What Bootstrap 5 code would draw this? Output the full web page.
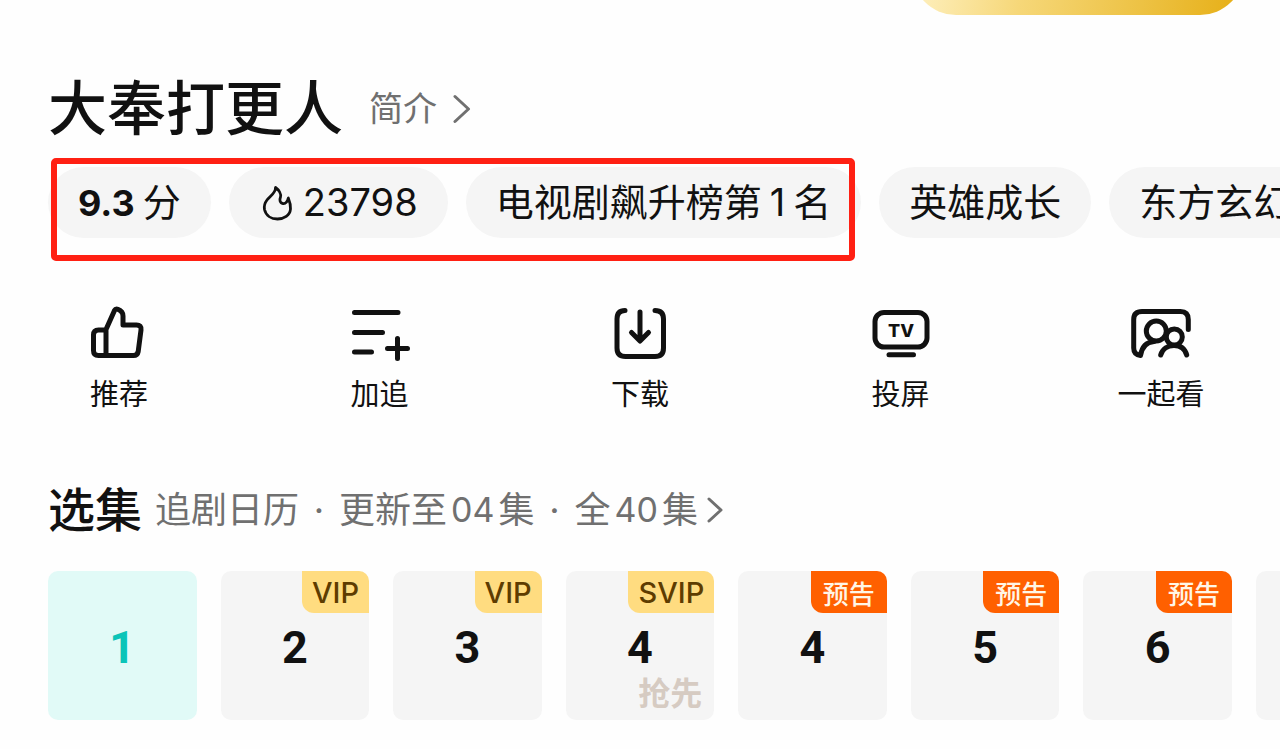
<!DOCTYPE html>
<html lang="zh-CN">
<head>
<meta charset="utf-8">
<meta name="viewport" content="width=device-width, initial-scale=1">
<title>大奉打更人</title>
<link href="https://cdn.jsdelivr.net/npm/bootstrap@5.3.0/dist/css/bootstrap.min.css" rel="stylesheet">
<style>
  body { font-family: Inter, "Noto Sans CJK SC", sans-serif; color: #111; background: #fefefe; }
  a, button { color: inherit; }
  .page-pad { padding-left: 48px; padding-right: 48px; }
  .icon-line { fill: none; stroke: currentColor; stroke-linecap: round; stroke-linejoin: round; }

  .top-strip { height: 15px; padding-right: 36px; }
  .gold-btn { width: 332px; height: 88px; background: linear-gradient(100deg, #fff3c8 0%, #f6d778 35%, #edc244 70%, #e6ae14 100%); }

  .title-row { padding-top: 58px; gap: 26px; }
  .show-title { font-size: 59px; line-height: 72px; font-weight: 500; }
  .intro-link { font-size: 34px; line-height: 48px; gap: 16px; color: #707070; }

  .chip-row { margin-top: 22px; gap: 18px; }
  .chip-group { gap: 18px; }
  .chip { height: 71px; padding: 0 30px; border-radius: 36px; background: #f5f5f5; font-size: 38px; gap: 8px; white-space: nowrap; }
  .chip-score { font-size: 36px; }
  .marker { position: absolute; top: -9px; right: 6px; bottom: -23px; left: 3px; border: 6px solid #ff2013; border-radius: 5px; pointer-events: none; }

  .action-row { margin-top: 64px; }
  .action { width: 142px; gap: 9px; font-size: 29px; line-height: 40px; }

  .section-head { margin-top: 67px; gap: 13px; }
  .section-title { font-size: 47px; line-height: 56px; font-weight: 500; }
  .section-sub { font-size: 36px; line-height: 48px; gap: 4px; color: #707070; }
  .sub-num { font-size: 34px; }
  .sub-dot { width: 32px; text-align: center; }

  .episode-row { margin-top: 33px; gap: 24px; padding-bottom: 29px; }
  .episode { flex: 0 0 calc((100% - 144px) / 7); aspect-ratio: 1; border-radius: 10px; background: #f5f5f5; font-family: "Liberation Sans Narrow", Roboto, sans-serif; font-size: 45px; line-height: 56px; font-weight: 700; padding-top: 6px; overflow: hidden; }
  .episode.current { background: #e1faf7; color: #0bc4b8; }
  .tag { position: absolute; top: 0; right: 0; height: 42px; padding: 0 10px; border-bottom-left-radius: 12px; background: #ffdc80; color: #5e3c00; font: 500 29px/44px Inter, sans-serif; }
  .tag-preview { padding: 0 12px; background: #ff6000; color: #fff6e6; font: 500 26px/44px "Noto Sans CJK SC", sans-serif; }
  .early { position: absolute; right: 12px; bottom: 9px; font: 700 32px/40px "Noto Sans CJK SC", sans-serif; color: #d6cbc2; }
</style>
</head>
<body>
<div class="top-strip d-flex justify-content-end align-items-end overflow-hidden">
  <button type="button" class="gold-btn border-0 rounded-pill flex-shrink-0" aria-label="会员"></button>
</div>

<main class="page-pad overflow-hidden">
  <header class="title-row d-flex align-items-center">
    <h1 class="show-title m-0">大奉打更人</h1>
    <a href="#" class="intro-link d-flex align-items-center text-decoration-none">简介
      <svg class="icon-line" width="18" height="30" viewBox="0 0 18 30" stroke-width="3" aria-hidden="true"><path d="M2 2.500 15.500 15 2 27.500"/></svg>
    </a>
  </header>

  <div class="chip-row d-flex">
    <div class="chip-group d-flex flex-shrink-0 position-relative">
      <a href="#" class="chip d-flex align-items-center text-decoration-none"><span class="chip-score fw-bold">9.3</span><span>分</span></a>
      <a href="#" class="chip d-flex align-items-center text-decoration-none">
        <svg class="icon-line" width="36" height="36" viewBox="-2 0 36 36" stroke-width="2.800" aria-hidden="true"><path d="M14.500 2.500C15 8 9 11 6 15C3 19 3 22 3.500 24.500C5 31 10.500 34 16.500 34C23 34 29 30.500 29.500 24C29.800 19.500 28.500 16 27.300 13C26.500 16.500 24.500 18.800 22 18.500C18.500 18 18.500 14.500 19.500 12C20.300 9 18 5 14.500 2.500Z"/></svg>
        <span>23798</span>
      </a>
      <a href="#" class="chip d-flex align-items-center text-decoration-none"><span>电视剧飙升榜第</span><span>1</span><span>名</span></a>
      <div class="marker"></div>
    </div>
    <a href="#" class="chip d-flex align-items-center flex-shrink-0 text-decoration-none">英雄成长</a>
    <a href="#" class="chip d-flex align-items-center flex-shrink-0 text-decoration-none">东方玄幻</a>
  </div>

  <div class="action-row d-flex justify-content-between">
    <button type="button" class="action d-flex flex-column align-items-center border-0 bg-transparent p-0">
      <svg class="icon-line" width="64" height="64" viewBox="0 0 64 64" stroke-width="5" aria-hidden="true"><path d="M19 27.500 27.500 8.500Q28.500 6.600 31 7.300Q36 9 36 14V23H49.500Q54.600 23 54 28L51.200 49.500Q50.500 53.500 46.500 53.500H11.500Q6.500 53.500 6.500 48.500V33Q6.500 28 11.500 28H19V53"/></svg>
      <span>推荐</span>
    </button>
    <button type="button" class="action d-flex flex-column align-items-center border-0 bg-transparent p-0">
      <svg class="icon-line" width="64" height="64" viewBox="0 0 64 64" stroke-width="5" aria-hidden="true"><path d="M6.500 10.500H50M6.500 30.500H34.500M6.500 50H23.500M39.500 46.500H59.500M49.500 36.500V56.500"/></svg>
      <span>加追</span>
    </button>
    <button type="button" class="action d-flex flex-column align-items-center border-0 bg-transparent p-0">
      <svg class="icon-line" width="64" height="64" viewBox="0 0 64 64" stroke-width="5" aria-hidden="true"><path d="M17 8.500Q9 8.500 9 17V46Q9 54.500 17.500 54.500H47Q55.500 54.500 55.500 46V17Q55.500 8.500 47 8.500M32 10V38.500M23.500 30.500 32 39 40.500 30.500"/></svg>
      <span>下载</span>
    </button>
    <button type="button" class="action d-flex flex-column align-items-center border-0 bg-transparent p-0">
      <svg class="icon-line" width="64" height="64" viewBox="0 0 64 64" stroke-width="5" aria-hidden="true"><rect x="6" y="10.500" width="52" height="34.500" rx="9"/><path d="M20 52.700H44.500"/><text x="32" y="35" text-anchor="middle" font-size="18" font-weight="800" fill="currentColor" stroke="none">TV</text></svg>
      <span>投屏</span>
    </button>
    <button type="button" class="action d-flex flex-column align-items-center border-0 bg-transparent p-0">
      <svg class="icon-line" width="64" height="64" viewBox="0 0 64 64" stroke-width="5" aria-hidden="true"><path d="M59.300 27.500V17.500Q59.300 9.500 51.500 9.500H13Q4.700 9.500 4.700 17.500V46Q4.700 52.500 11.500 53.500Q13.500 40.500 25 39.500"/><circle cx="27.300" cy="29" r="10"/><circle cx="45.300" cy="35" r="8"/><path d="M31.700 53C33.500 46.500 39 43.500 45 43.500S56 46.500 57.700 53"/></svg>
      <span>一起看</span>
    </button>
  </div>

  <section>
    <div class="section-head d-flex align-items-center">
      <h2 class="section-title m-0">选集</h2>
      <a href="#" class="section-sub d-flex align-items-center text-decoration-none">
        <span>追剧日历</span><span class="sub-dot">·</span><span>更新至</span><span class="sub-num">04</span><span>集</span><span class="sub-dot">·</span><span>全</span><span class="sub-num">40</span><span>集</span>
        <svg class="icon-line ms-1" width="18" height="28" viewBox="0 0 18 28" stroke-width="3" aria-hidden="true"><path d="M3 3 15 14 3 25"/></svg>
      </a>
    </div>
    <div class="episode-row d-flex">
      <button type="button" class="episode current position-relative border-0">1</button>
      <button type="button" class="episode position-relative border-0">2<span class="tag">VIP</span></button>
      <button type="button" class="episode position-relative border-0">3<span class="tag">VIP</span></button>
      <button type="button" class="episode position-relative border-0">4<span class="tag">SVIP</span><span class="early">抢先</span></button>
      <button type="button" class="episode position-relative border-0">4<span class="tag tag-preview">预告</span></button>
      <button type="button" class="episode position-relative border-0">5<span class="tag tag-preview">预告</span></button>
      <button type="button" class="episode position-relative border-0">6<span class="tag tag-preview">预告</span></button>
      <button type="button" class="episode position-relative border-0" aria-label="7"></button>
    </div>
  </section>
</main>
<script src="https://cdn.jsdelivr.net/npm/bootstrap@5.3.0/dist/js/bootstrap.bundle.min.js"></script>
</body>
</html>
